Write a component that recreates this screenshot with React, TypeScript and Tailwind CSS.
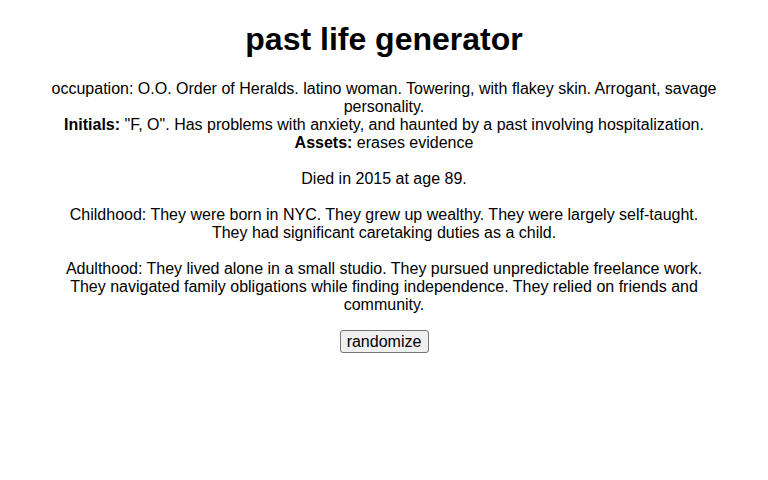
export default function App() {
  const font = { fontFamily: '"Liberation Sans", Arial, sans-serif' };
  return (
    <div className="min-h-[480px] bg-white text-black text-center" style={font}>
      <h1 className="text-[32px] leading-[37px] font-bold pt-[21px] mb-[22px]">past life generator</h1>
      <div className="max-w-[666px] mx-auto text-[16px] leading-[18px]">
        <div>
          occupation: O.O. Order of Heralds. latino woman. Towering, with flakey skin. Arrogant, savage personality.
        </div>
        <div>
          <b>Initials:</b> "F, O". Has problems with anxiety, and haunted by a past involving hospitalization.
        </div>
        <div>
          <b>Assets:</b> erases evidence
        </div>
        <div className="mt-[18px]">Died in 2015 at age 89.</div>
        <div className="mt-[18px]">
          Childhood: They were born in NYC. They grew up wealthy. They were largely self-taught. They had significant caretaking duties as a child.
        </div>
        <div className="mt-[18px]">
          Adulthood: They lived alone in a small studio. They pursued unpredictable freelance work. They navigated family obligations while finding independence. They relied on friends and community.
        </div>
        <div className="mt-[16px]">
          <button className="h-[23px] w-[89px] border border-[#767676] bg-[#efefef] rounded-[3px] text-[16px] leading-[18px] text-black">
            randomize
          </button>
        </div>
      </div>
    </div>
  );
}
